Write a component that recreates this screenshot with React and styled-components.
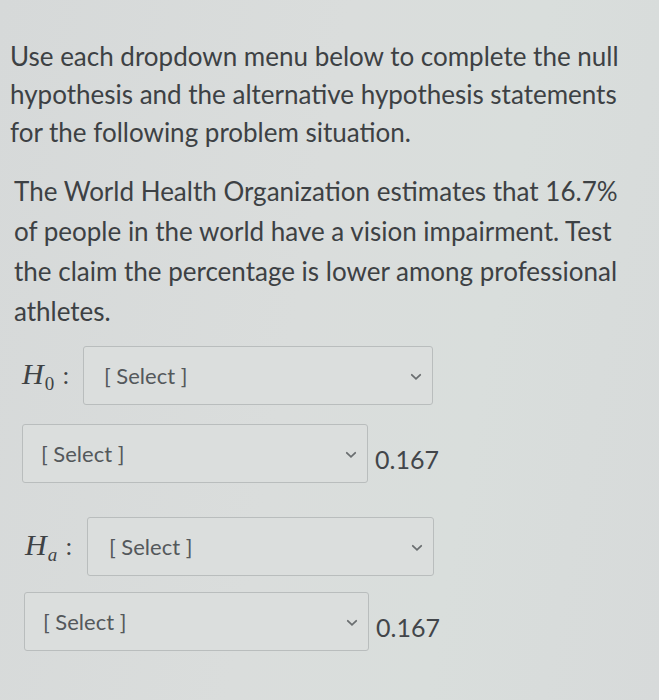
import React from 'react';
import styled, { createGlobalStyle } from 'styled-components';

const GlobalStyle = createGlobalStyle`
  html, body {
    margin: 0;
    padding: 0;
    background: #d8dbdb;
  }
  body {
    font-family: Lato, "Open Sans", sans-serif;
    color: #3d4144;
  }
`;

const Page = styled.div`
  width: 659px;
  height: 700px;
  box-sizing: border-box;
  padding: 37px 0 0 10px;
  background: linear-gradient(100deg, #d6d9d9 0%, #dadddc 45%, #d9dedc 70%, #d7dada 100%);
  overflow: hidden;
`;

const Para = styled.p`
  margin: 0 0 ${({ gap }) => gap}px ${({ indent }) => indent}px;
  font-size: 26px;
  line-height: ${({ lh }) => lh}px;
  white-space: nowrap;
`;

const Row = styled.div`
  display: flex;
  align-items: center;
  margin: 0 0 ${({ gap }) => gap}px ${({ indent }) => indent}px;
`;

// math-style label, e.g. H with a subscript
const Label = styled.span`
  box-sizing: border-box;
  font-family: "Liberation Serif", "DejaVu Serif", serif;
  font-style: italic;
  font-size: 30px;
  width: ${({ w }) => w}px;
  padding-left: ${({ pl }) => pl}px;
  color: #3e4245;
  sub {
    font-style: ${({ subItalic }) => (subItalic ? 'italic' : 'normal')};
    font-size: 19px;
    vertical-align: -6px;
    margin-left: 1px;
  }
  .colon {
    font-style: normal;
    font-size: 26px;
    margin-left: 8px;
  }
`;

const SelectBox = styled.div`
  box-sizing: border-box;
  width: ${({ w }) => w}px;
  height: 59px;
  border: 1px solid #b9bdbd;
  border-radius: 3px;
  background: #dbdedd;
  display: flex;
  align-items: center;
  justify-content: space-between;
  padding: 0 10px 0 ${({ pl }) => pl}px;
  font-size: 22px;
  color: #54585b;
`;

const Chevron = styled.svg`
  width: 12px;
  height: 8px;
  margin-top: 2px;
`;

const Value = styled.span`
  font-size: 25px;
  margin: 10px 0 0 7px;
  color: #42464a;
`;

const Arrow = () => (
  <Chevron viewBox="0 0 12 8">
    <path d="M1.8 1.8 L6 5.8 L10.2 1.8" fill="none" stroke="#6a6e70" strokeWidth="1.8" strokeLinecap="round" />
  </Chevron>
);

export default function App() {
  return (
    <Page>
      <GlobalStyle />
      <Para lh={38} gap={20} indent={0}>
        Use each dropdown menu below to complete the null<br />
        hypothesis and the alternative hypothesis statements<br />
        for the following problem situation.
      </Para>
      <Para lh={40} gap={15} indent={4}>
        The World Health Organization estimates that 16.7%<br />
        of people in the world have a vision impairment. Test<br />
        the claim the percentage is lower among professional<br />
        athletes.
      </Para>
      <Row indent={8} gap={19}>
        <Label w={65} pl={4}>
          H<sub>0</sub>
          <span className="colon">:</span>
        </Label>
        <SelectBox w={350} pl={20}>
          [ Select ]
          <Arrow />
        </SelectBox>
      </Row>
      <Row indent={12} gap={34}>
        <SelectBox w={346} pl={18}>
          [ Select ]
          <Arrow />
        </SelectBox>
        <Value>0.167</Value>
      </Row>
      <Row indent={12} gap={16}>
        <Label w={65} pl={3} subItalic>
          H<sub>a</sub>
          <span className="colon">:</span>
        </Label>
        <SelectBox w={347} pl={21}>
          [ Select ]
          <Arrow />
        </SelectBox>
      </Row>
      <Row indent={14} gap={0}>
        <SelectBox w={345} pl={18}>
          [ Select ]
          <Arrow />
        </SelectBox>
        <Value>0.167</Value>
      </Row>
    </Page>
  );
}
